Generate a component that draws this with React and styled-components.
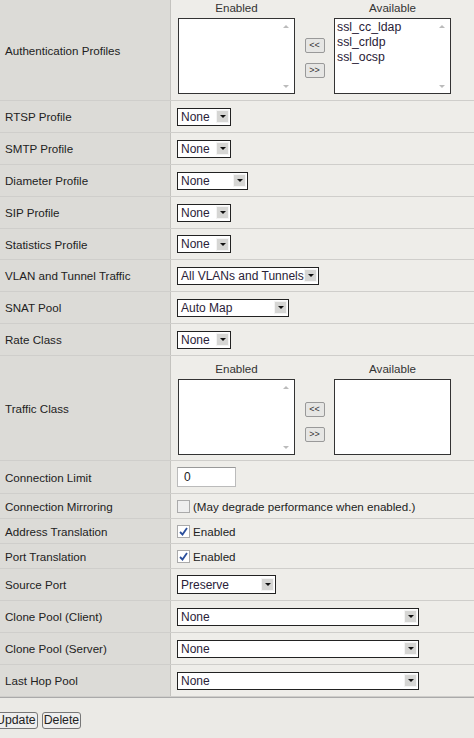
import styled, { createGlobalStyle } from 'styled-components';

const GlobalStyle = createGlobalStyle`
  html, body {
    margin: 0;
    padding: 0;
    background: #ebeae6;
    font-family: 'Liberation Sans', Arial, sans-serif;
    font-size: 11.6px;
    color: #222;
    overflow: hidden;
  }
`;

const Page = styled.div`
  width: 474px;
  height: 738px;
  background: #ebeae6;
`;

const Row = styled.div`
  display: grid;
  grid-template-columns: 171px 1fr;
  height: ${(p) => p.$h}px;
  border-bottom: 1px solid #cfcecb;
  box-sizing: border-box;
`;

const Label = styled.div`
  display: flex;
  align-items: center;
  padding-left: 5px;
  background: #dcdbd7;
  border-right: 1px solid #c4c3bf;
`;

const Value = styled.div`
  display: flex;
  align-items: ${(p) => (p.$top ? 'flex-start' : 'center')};
  padding-left: 6px;
  background: #eeede9;
  gap: 3px;
`;

const Select = styled.div`
  display: flex;
  align-items: center;
  justify-content: space-between;
  width: ${(p) => p.$w}px;
  height: ${(p) => p.$hgt || 18}px;
  box-sizing: border-box;
  border: 1px solid #222;
  background: #fff;
  padding-left: 3px;
  color: #2a2238;
  font-size: 12px;
`;

const Arrow = styled.span`
  width: 13px;
  height: 13px;
  margin-right: 1px;
  background: #d6d6d4;
  border: 1px solid #f4f4f4;
  box-sizing: border-box;
  display: flex;
  align-items: center;
  justify-content: center;
  &::after {
    content: '';
    border-left: 3px solid transparent;
    border-right: 3px solid transparent;
    border-top: 3px solid #111;
  }
`;

const Swap = styled.div`
  display: flex;
  align-items: flex-start;
  padding-left: 1px;
`;

const ListColumn = styled.div`
  display: flex;
  flex-direction: column;
  align-items: center;
`;

const ListTitle = styled.div`
  height: 18px;
  line-height: 16px;
  color: #333;
`;

const ListBox = styled.div`
  position: relative;
  width: 117px;
  height: 76px;
  box-sizing: border-box;
  border: 1px solid #333;
  background: #fff;
  padding: 1px 2px;
  line-height: 15px;
  color: #2a2238;
  font-size: 12.3px;
`;

const Scroll = styled.div`
  position: absolute;
  top: 0;
  right: 0;
  bottom: 0;
  width: 16px;
  display: flex;
  flex-direction: column;
  justify-content: space-between;
  align-items: center;
  padding: 6px 0 5px;
  box-sizing: border-box;
  &::before,
  &::after {
    content: '';
    border-left: 3px solid transparent;
    border-right: 3px solid transparent;
  }
  &::before {
    border-bottom: 3px solid #bbb;
  }
  &::after {
    border-top: 3px solid #bbb;
  }
`;

const Movers = styled.div`
  display: flex;
  flex-direction: column;
  gap: 10px;
  width: 39px;
  align-items: center;
  padding-top: ${(p) => p.$top}px;
`;

const MoveBtn = styled.div`
  width: 20px;
  height: 15px;
  box-sizing: border-box;
  border: 1px solid #999;
  border-radius: 2px;
  background: #e6e6e4;
  font-size: 9px;
  line-height: 13px;
  text-align: center;
  color: #333;
`;

const TextInput = styled.div`
  width: 59px;
  height: 20px;
  box-sizing: border-box;
  border: 1px solid #bbb;
  border-top-color: #999;
  background: #fff;
  padding-left: 6px;
  line-height: 18px;
  font-size: 12px;
`;

const Check = styled.span`
  width: 13px;
  height: 13px;
  box-sizing: border-box;
  border: 1px solid #aaa;
  background: ${(p) => (p.$on ? '#fff' : '#eee')};
  display: inline-flex;
  align-items: center;
  justify-content: center;
`;

const Footer = styled.div`
  border-top: 1px solid #aaa;
  padding-top: 14px;
  display: flex;
  gap: 4px;
  margin-left: -6px;
`;

const Button = styled.div`
  height: 17px;
  box-sizing: border-box;
  border: 1px solid #777;
  border-radius: 3px;
  background: #eee;
  padding: 0 1px;
  line-height: 15px;
  font-size: 12.3px;
`;

function Swapper({ items, top }) {
  return (
    <Swap>
      <ListColumn>
        <ListTitle>Enabled</ListTitle>
        <ListBox>
          <Scroll />
        </ListBox>
      </ListColumn>
      <Movers $top={top}>
        <MoveBtn>&lt;&lt;</MoveBtn>
        <MoveBtn>&gt;&gt;</MoveBtn>
      </Movers>
      <ListColumn>
        <ListTitle>Available</ListTitle>
        <ListBox>
          {items.map((i) => (
            <div key={i}>{i}</div>
          ))}
          {items.length > 0 && <Scroll />}
        </ListBox>
      </ListColumn>
    </Swap>
  );
}

function Dropdown({ w, text, h }) {
  return (
    <Select $w={w} $hgt={h}>
      <span>{text}</span>
      <Arrow />
    </Select>
  );
}

function CheckMark() {
  return (
    <svg width="9" height="9" viewBox="0 0 9 9">
      <path d="M1 5 L3.5 7.5 L8 1" fill="none" stroke="#2b4f9c" strokeWidth="1.8" />
    </svg>
  );
}

const selects = [
  ['RTSP Profile', 54, 'None', 32],
  ['SMTP Profile', 54, 'None', 32],
  ['Diameter Profile', 71, 'None', 32],
  ['SIP Profile', 54, 'None', 32],
  ['Statistics Profile', 54, 'None', 31],
  ['VLAN and Tunnel Traffic', 142, 'All VLANs and Tunnels', 32],
  ['SNAT Pool', 112, 'Auto Map', 32],
  ['Rate Class', 54, 'None', 32],
];

const pools = ['Clone Pool (Client)', 'Clone Pool (Server)', 'Last Hop Pool'];

export default function App() {
  return (
    <Page>
      <GlobalStyle />
      <Row $h={101}>
        <Label>Authentication Profiles</Label>
        <Value $top>
          <Swapper items={['ssl_cc_ldap', 'ssl_crldp', 'ssl_ocsp']} top={38} />
        </Value>
      </Row>
      {selects.map(([label, w, text, h]) => (
        <Row key={label} $h={h}>
          <Label>{label}</Label>
          <Value>
            <Dropdown w={w} text={text} />
          </Value>
        </Row>
      ))}
      <Row $h={105}>
        <Label>Traffic Class</Label>
        <Value>
          <Swapper items={[]} top={41} />
        </Value>
      </Row>
      <Row $h={33}>
        <Label>Connection Limit</Label>
        <Value>
          <TextInput>0</TextInput>
        </Value>
      </Row>
      <Row $h={25}>
        <Label>Connection Mirroring</Label>
        <Value>
          <Check />
          (May degrade performance when enabled.)
        </Value>
      </Row>
      <Row $h={25}>
        <Label>Address Translation</Label>
        <Value>
          <Check $on>
            <CheckMark />
          </Check>
          Enabled
        </Value>
      </Row>
      <Row $h={25}>
        <Label>Port Translation</Label>
        <Value>
          <Check $on>
            <CheckMark />
          </Check>
          Enabled
        </Value>
      </Row>
      <Row $h={32}>
        <Label>Source Port</Label>
        <Value>
          <Dropdown w={99} text="Preserve" h={19} />
        </Value>
      </Row>
      {pools.map((p) => (
        <Row key={p} $h={32}>
          <Label>{p}</Label>
          <Value>
            <Dropdown w={242} text="None" />
          </Value>
        </Row>
      ))}
      <Footer>
        <Button>Update</Button>
        <Button>Delete</Button>
      </Footer>
    </Page>
  );
}
